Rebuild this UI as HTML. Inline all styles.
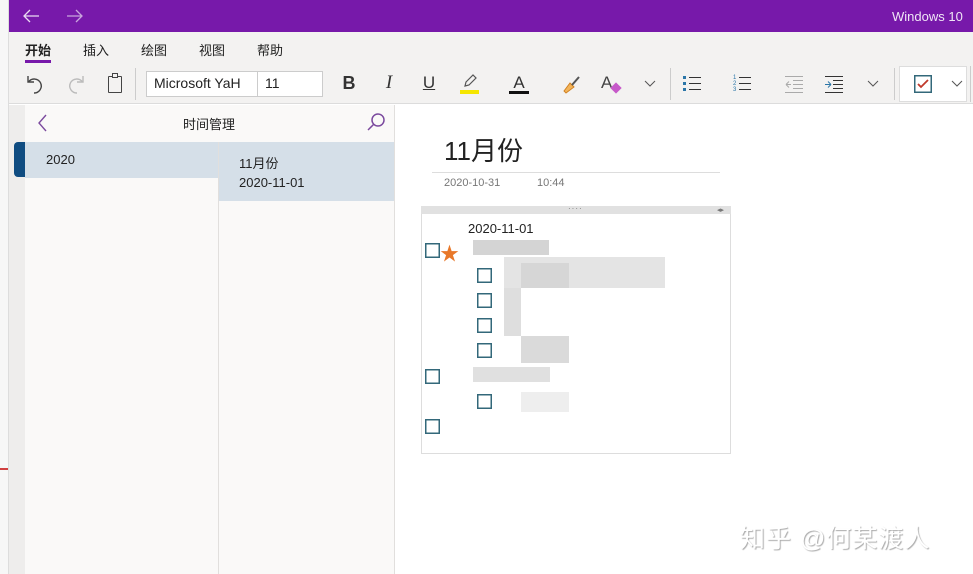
<!DOCTYPE html>
<html><head><meta charset="utf-8"><style>
*{margin:0;padding:0;box-sizing:border-box}
body{width:973px;height:574px;overflow:hidden;background:#fff;font-family:"Liberation Sans","Noto Sans CJK SC",sans-serif;position:relative;color:#222}
.a{position:absolute}
.cb{position:absolute;width:15px;height:15px;border:1px solid #33687a;box-shadow:inset 0 0 0 0.5px #33687a;background:#fff}
.blur{position:absolute;background:#dcdcdc}
.tb{position:absolute;top:62px;height:42px;display:flex;align-items:center;justify-content:center}
</style></head><body>
<div class="a" style="left:0;top:0;width:9px;height:574px;background:#f7f7f7;border-right:1px solid #ddd"></div>
<div class="a" style="left:0;top:468px;width:8px;height:2px;background:#d04040"></div>
<div class="a" style="left:9px;top:0;width:964px;height:32px;background:#7719aa"></div>
<svg class="a" style="left:22px;top:8px" width="18" height="16"><path d="M17 8H2M8 2L2 8l6 6" fill="none" stroke="#eadcf2" stroke-width="1.3"/></svg>
<svg class="a" style="left:66px;top:8px" width="18" height="16"><path d="M1 8h15M10 2l6 6-6 6" fill="none" stroke="#c9a6dd" stroke-width="1.3"/></svg>
<div class="a" style="left:892px;top:9px;color:#f0e6f6;font-size:13px">Windows 10</div>
<div class="a" style="left:9px;top:32px;width:964px;height:72px;background:#f3f2f1;border-bottom:1px solid #dcdcdc"></div>
<div class="a" style="left:25px;top:40px;font-size:13px;font-weight:bold">开始</div>
<div class="a" style="left:25px;top:60px;width:26px;height:3px;background:#7719aa"></div>
<div class="a" style="left:83px;top:40px;font-size:13px">插入</div>
<div class="a" style="left:141px;top:40px;font-size:13px">绘图</div>
<div class="a" style="left:199px;top:40px;font-size:13px">视图</div>
<div class="a" style="left:257px;top:40px;font-size:13px">帮助</div>
<svg class="a" style="left:25px;top:73px" width="22" height="22"><path d="M3 3v6h6M3.5 9A7 7 0 1 1 9 20" fill="none" stroke="#444" stroke-width="1.4"/></svg>
<svg class="a" style="left:64px;top:73px" width="22" height="22"><path d="M19 3v6h-6M18.5 9A7 7 0 1 0 13 20" fill="none" stroke="#bbb" stroke-width="1.4"/></svg>
<div class="a" style="left:108px;top:76px;width:14px;height:17px;border:1.5px solid #444;border-radius:1px"></div>
<div class="a" style="left:112px;top:73px;width:6px;height:5px;border:1.5px solid #444;background:#f3f2f1"></div>
<div class="a" style="left:135px;top:68px;width:1px;height:32px;background:#ccc"></div>
<div class="a" style="left:146px;top:71px;width:177px;height:26px;background:#fff;border:1px solid #ccc"></div>
<div class="a" style="left:257px;top:72px;width:1px;height:24px;background:#ccc"></div>
<div class="a" style="left:154px;top:75px;font-size:14px">Microsoft YaH</div>
<div class="a" style="left:265px;top:75px;font-size:14px">11</div>
<div class="tb" style="left:338px;width:22px;font-size:18px;font-weight:bold;color:#333">B</div>
<div class="tb" style="left:378px;width:22px;font-size:19px;font-style:italic;font-family:'Liberation Serif',serif;color:#333">I</div>
<div class="tb" style="left:418px;width:22px;font-size:17px;text-decoration:underline;color:#333">U</div>
<div class="a" style="left:460px;top:90px;width:19px;height:4px;background:#f5e600"></div>
<svg class="a" style="left:462px;top:73px" width="16" height="16"><path d="M3 13l1-4 7-7 3 3-7 7z" fill="none" stroke="#555" stroke-width="1.2"/></svg>
<div class="tb" style="left:508px;width:22px;font-size:17px;color:#333">A</div>
<div class="a" style="left:509px;top:91px;width:20px;height:3px;background:#111"></div>
<svg class="a" style="left:562px;top:74px" width="20" height="20"><path d="M2 17l6-8 4 4-8 6z" fill="#f2b45a" stroke="#d08020"/><path d="M10 11l7-8" stroke="#555" stroke-width="2"/></svg>
<div class="a" style="left:601px;top:73px;font-size:17px;color:#444">A</div>
<div class="a" style="left:612px;top:84px;width:8px;height:8px;background:#c659c9;transform:rotate(45deg)"></div>
<svg class="a" style="left:644px;top:80px" width="12" height="8"><path d="M1 1l5 5 5-5" fill="none" stroke="#555"/></svg>
<div class="a" style="left:670px;top:68px;width:1px;height:32px;background:#ccc"></div>
<svg class="a" style="left:682px;top:74px" width="20" height="20"><g fill="#2b76a8"><rect x="1" y="2" width="3" height="3"/><rect x="1" y="8" width="3" height="3"/><rect x="1" y="14" width="3" height="3"/></g><g stroke="#333"><path d="M7 3.5h12M7 9.5h12M7 15.5h12"/></g></svg>
<svg class="a" style="left:732px;top:74px" width="20" height="20"><g fill="#2b76a8" font-size="6" font-family="Liberation Sans"><text x="1" y="5">1</text><text x="1" y="11">2</text><text x="1" y="17">3</text></g><g stroke="#333"><path d="M7 3.5h12M7 9.5h12M7 15.5h12"/></g></svg>
<svg class="a" style="left:784px;top:74px" width="20" height="20"><g stroke="#aaa"><path d="M1 2.5h18M9 6.5h10M9 10.5h10M9 14.5h10M1 18.5h18M2 10.5h5M2 10.5l3-3M2 10.5l3 3"/></g></svg>
<svg class="a" style="left:824px;top:74px" width="20" height="20"><g stroke="#333"><path d="M1 2.5h18M9 6.5h10M9 10.5h10M9 14.5h10M1 18.5h18"/></g><path d="M1 10.5h6M7 10.5l-3-3M7 10.5l-3 3" stroke="#2b76a8"/></svg>
<svg class="a" style="left:867px;top:80px" width="12" height="8"><path d="M1 1l5 5 5-5" fill="none" stroke="#555"/></svg>
<div class="a" style="left:894px;top:68px;width:1px;height:32px;background:#ccc"></div>
<div class="a" style="left:899px;top:66px;width:68px;height:36px;background:#fff;border:1px solid #ddd"></div>
<svg class="a" style="left:914px;top:75px" width="18" height="18"><rect x=".75" y=".75" width="16.5" height="16.5" fill="none" stroke="#33687a" stroke-width="1.5"/><path d="M4 9l3 3 7-7" fill="none" stroke="#c0392b" stroke-width="1.8"/></svg>
<svg class="a" style="left:951px;top:80px" width="12" height="8"><path d="M1 1l5 5 5-5" fill="none" stroke="#555"/></svg>
<div class="a" style="left:970px;top:66px;width:1px;height:36px;background:#ccc"></div>
<!-- panels -->
<div class="a" style="left:9px;top:105px;width:16px;height:469px;background:#eeedec"></div>
<div class="a" style="left:25px;top:105px;width:370px;height:469px;background:#faf9f8;border-right:1px solid #e1dfdd"></div>
<div class="a" style="left:218px;top:142px;width:1px;height:432px;background:#e1dfdd"></div>
<svg class="a" style="left:37px;top:114px" width="12" height="18"><path d="M9 1L2 9l7 8" fill="none" stroke="#7b4a9e" stroke-width="1.4"/></svg>
<div class="a" style="left:183px;top:114px;font-size:13px">时间管理</div>
<svg class="a" style="left:366px;top:112px" width="20" height="20"><circle cx="12" cy="8" r="6" fill="none" stroke="#7b4a9e" stroke-width="1.5"/><path d="M8 12l-6 6" stroke="#7b4a9e" stroke-width="1.5"/></svg>
<div class="a" style="left:25px;top:142px;width:193px;height:36px;background:#d5dfe8"></div>
<div class="a" style="left:14px;top:142px;width:11px;height:35px;background:#0f4c81;border-radius:4px 0 0 4px"></div>
<div class="a" style="left:46px;top:152px;font-size:13px">2020</div>
<div class="a" style="left:219px;top:142px;width:175px;height:59px;background:#d5dfe8"></div>
<div class="a" style="left:239px;top:153px;font-size:13px">11月份</div>
<div class="a" style="left:239px;top:175px;font-size:13px">2020-11-01</div>
<!-- content -->
<div class="a" style="left:444px;top:131px;font-size:26px">11月份</div>
<div class="a" style="left:432px;top:172px;width:288px;height:1px;background:#ddd"></div>
<div class="a" style="left:444px;top:177px;font-size:11px;color:#777">2020-10-31</div>
<div class="a" style="left:537px;top:177px;font-size:11px;color:#777">10:44</div>
<div class="a" style="left:421px;top:206px;width:310px;height:248px;border:1px solid #ddd"></div>
<div class="a" style="left:421px;top:206px;width:310px;height:8px;background:#e1e1e1"></div>
<div class="a" style="left:568px;top:204px;font-size:8px;color:#777;letter-spacing:1px">····</div>
<div class="a" style="left:717px;top:206px;font-size:7px;color:#777">◂▸</div>
<div class="a" style="left:468px;top:221px;font-size:13px">2020-11-01</div>
<div class="cb" style="left:425px;top:243px"></div>
<div class="a" style="left:440px;top:239px;font-size:19px;color:#e8782a">★</div>
<div class="blur" style="left:473px;top:240px;width:76px;height:15px;background:#d4d4d4"></div>
<div class="cb" style="left:477px;top:268px"></div>
<div class="blur" style="left:504px;top:257px;width:161px;height:31px;background:#e4e4e4"></div>
<div class="blur" style="left:521px;top:263px;width:48px;height:25px;background:#d6d6d6"></div>
<div class="cb" style="left:477px;top:293px"></div>
<div class="cb" style="left:477px;top:318px"></div>
<div class="blur" style="left:504px;top:288px;width:17px;height:48px;background:#dedede"></div>
<div class="cb" style="left:477px;top:343px"></div>
<div class="blur" style="left:521px;top:336px;width:48px;height:27px;background:#dadada"></div>
<div class="cb" style="left:425px;top:369px"></div>
<div class="blur" style="left:473px;top:367px;width:77px;height:15px;background:#e0e0e0"></div>
<div class="cb" style="left:477px;top:394px"></div>
<div class="blur" style="left:521px;top:392px;width:48px;height:20px;background:#eeeeee"></div>
<div class="cb" style="left:425px;top:419px"></div>
<div class="a" style="left:740px;top:519px;font-size:25px;color:#fff;letter-spacing:1px;text-shadow:1px 1px 1px #aaa">知乎 @何某渡人</div>
</body></html>
